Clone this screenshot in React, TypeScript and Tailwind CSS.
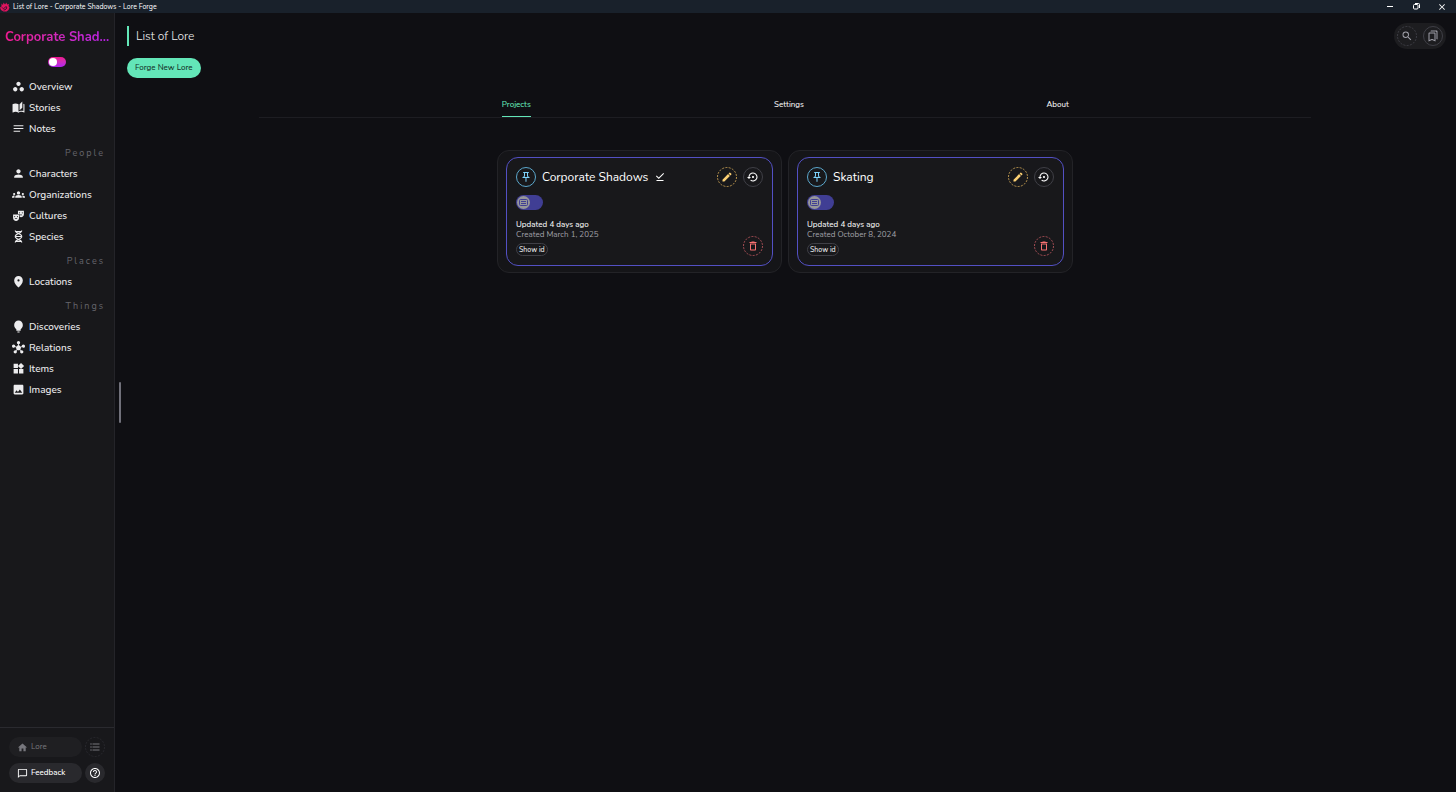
import { useState } from "react";
import type { IconType } from "react-icons";
import {
  MdAutoStories,
  MdChatBubbleOutline,
  MdClose,
  MdDeleteOutline,
  MdDownloadDone,
  MdEdit,
  MdFormatListBulleted,
  MdGroups,
  MdHelpOutline,
  MdHome,
  MdHub,
  MdImage,
  MdNotes,
  MdOutlineBookmarks,
  MdOutlinePushPin,
  MdPerson,
  MdSearch,
  MdSettingsBackupRestore,
  MdTheaterComedy,
  MdWidgets,
  MdWorkspaces,
} from "react-icons/md";

type IconProps = { className?: string };
type NavItem = { label: string; icon: IconType | ((props: IconProps) => React.ReactNode) };
type NavSection = { title?: string; items: NavItem[] };

const HelixIcon = ({ className }: IconProps) => (
  <svg viewBox="0 0 24 24" className={className} fill="none" stroke="currentColor" strokeWidth="2">
    <path d="M6 1c0 6 12 5 12 11S6 17 6 23M18 1c0 6-12 5-12 11s12 5 12 11" />
    <path d="M7 3h10M7 12h10M7 21h10" />
  </svg>
);

const PinIcon = ({ className }: IconProps) => (
  <svg viewBox="0 0 24 24" className={className} fill="currentColor">
    <path
      fillRule="evenodd"
      d="M12 2a8 8 0 0 0-8 8c0 5 4 9 8 13 4-4 8-8 8-13a8 8 0 0 0-8-8zm0 6a2 2 0 1 1 0 4 2 2 0 0 1 0-4z"
    />
  </svg>
);

const BulbIcon = ({ className }: IconProps) => (
  <svg viewBox="0 0 24 24" className={className} fill="currentColor">
    <path d="M12 1a8 8 0 0 0-8 8c0 4 2 6 4 8v3h8v-3c2-2 4-4 4-8a8 8 0 0 0-8-8zM10 21h4v2h-4z" />
  </svg>
);

const SECTIONS: NavSection[] = [
  {
    items: [
      { label: "Overview", icon: MdWorkspaces },
      { label: "Stories", icon: MdAutoStories },
      { label: "Notes", icon: MdNotes },
    ],
  },
  {
    title: "People",
    items: [
      { label: "Characters", icon: MdPerson },
      { label: "Organizations", icon: MdGroups },
      { label: "Cultures", icon: MdTheaterComedy },
      { label: "Species", icon: HelixIcon },
    ],
  },
  { title: "Places", items: [{ label: "Locations", icon: PinIcon }] },
  {
    title: "Things",
    items: [
      { label: "Discoveries", icon: BulbIcon },
      { label: "Relations", icon: MdHub },
      { label: "Items", icon: MdWidgets },
      { label: "Images", icon: MdImage },
    ],
  },
];

const PROJECTS = [
  { name: "Corporate Shadows", created: "March 1, 2025", active: true },
  { name: "Skating", created: "October 8, 2024", active: false },
];

const TABS = ["Projects", "Settings", "About"];

const FlameLogo = () => (
  <svg viewBox="0 0 20 20" className="size-[10px]" aria-hidden="true">
    <path
      fill="#e0145f"
      d="M3 3l3 3 1-5 3 4 3-4 1 4 4-1-1 4 2 3-2 5-4 3H7l-5-3-2-5 3-2z"
    />
    <path fill="none" stroke="#3b1030" strokeWidth="2" d="M4 11c3 4 6 1 7-2M7 16c5 0 7-3 6-7" />
  </svg>
);

// finer dashes than the border style gives at this size
const DashedRing = ({ className }: IconProps) => (
  <svg viewBox="0 0 20 20" className={`absolute inset-0 size-full ${className ?? ""}`} fill="none">
    <circle cx="10" cy="10" r="9.5" stroke="currentColor" strokeDasharray="2 1.3" />
  </svg>
);

const TitleBar = () => (
  <header className="flex h-[13px] shrink-0 items-center bg-[#19212b] pr-[1px] text-white">
    <FlameLogo />
    <span className="ml-[3px] text-[7px] leading-[12px]">
      List of Lore - Corporate Shadows - Lore Forge
    </span>
    <div className="ml-auto flex">
      <button aria-label="Minimize" className="flex h-[13px] w-[26px] items-center justify-center">
        <span className="h-px w-[6px] bg-white" />
      </button>
      <button aria-label="Restore" className="flex h-[13px] w-[26px] items-center justify-center">
        <svg viewBox="0 0 7 7" className="size-[7px]" fill="none" stroke="white">
          <rect x=".5" y="1.5" width="4.5" height="4.5" rx="1" />
          <path d="M2 .5h3.500a1 1 0 0 1 1 1V5" />
        </svg>
      </button>
      <button aria-label="Close" className="flex h-[13px] w-[26px] items-center justify-center">
        <MdClose className="size-[10px]" />
      </button>
    </div>
  </header>
);

const Sidebar = () => (
  <aside className="flex w-[115px] shrink-0 flex-col border-r border-[#242429] bg-[#18181b]">
    <h2 className="mt-[15px] self-start truncate bg-linear-to-r from-[#f0148c] to-[#b81ee6] bg-clip-text pl-[5px] text-[13px] leading-[18px] font-bold text-transparent">
      Corporate Shad...
    </h2>
    <label className="mx-auto mt-[11px] block h-[10px] w-[18px] cursor-pointer rounded-full bg-linear-to-b from-[#f0148c] to-[#b01ef0] p-px">
      <input type="checkbox" aria-label="Project theme" className="peer sr-only" />
      <span className="block size-[8px] rounded-full bg-white peer-checked:ml-[8px]" />
    </label>

    <nav className="mt-[9px] flex flex-col">
      {SECTIONS.map((section, i) => (
        <div key={i}>
          {section.title && (
            <h3 className="mt-[4px] pr-[9px] text-right text-[9px] leading-[20px] tracking-[2px] text-[#66666d]">
              {section.title}
            </h3>
          )}
          {section.items.map(({ label, icon: Icon }) => (
            <a
              key={label}
              href="#"
              className="flex h-[21px] items-center gap-[4px] pl-[12px] text-[10px] leading-[14px] font-medium text-[#ececee]"
            >
              <Icon className="size-[13px] shrink-0" />
              {label}
            </a>
          ))}
        </div>
      ))}
    </nav>

    <div className="mt-auto grid grid-cols-[73px_20px] gap-x-[3px] gap-y-[6px] border-t border-[#2a2a2f] px-[9px] pt-[9px] pb-[9px]">
      <button className="flex h-[20px] items-center gap-[3px] rounded-full bg-[#1f1f22] pl-[8px] text-[8px] text-[#77777d]">
        <MdHome className="size-[11px]" />
        Lore
      </button>
      <button
        aria-label="Project list"
        className="relative flex size-[20px] items-center justify-center rounded-full text-[#77777d]"
      >
        <DashedRing className="text-[#29292e]" />
        <MdFormatListBulleted className="size-[12px]" />
      </button>
      <button className="flex h-[20px] items-center gap-[3px] rounded-full bg-[#29292d] pl-[8px] text-[8px] font-medium text-white">
        <MdChatBubbleOutline className="size-[11px]" />
        Feedback
      </button>
      <button
        aria-label="Help"
        className="flex size-[20px] items-center justify-center rounded-full bg-[#29292d] text-white"
      >
        <MdHelpOutline className="size-[12px]" />
      </button>
    </div>
  </aside>
);

const ProjectCard = ({ name, created, active }: (typeof PROJECTS)[number]) => (
  <article className="w-[285px] rounded-[12px] border border-[#232327] bg-[#151518] px-[8px] py-[6px]">
    <div className="rounded-[12px] border border-[#5350c4] bg-[#18181b] p-[9px]">
      <div className="flex h-[20px] items-center">
        <button
          aria-label={`Pin ${name}`}
          className="flex size-[20px] items-center justify-center rounded-full border border-[#5ba7cc] text-[#7dd3fc]"
        >
          <MdOutlinePushPin className="size-[12px]" />
        </button>
        <h2 className="ml-[6px] text-[12px] leading-[18px] text-white">{name}</h2>
        {active && <MdDownloadDone className="ml-[6px] size-[12px] text-white" />}
        <button
          aria-label={`Edit ${name}`}
          className="relative ml-auto flex size-[20px] items-center justify-center rounded-full text-[#fcd073]"
        >
          <DashedRing className="text-[#b9954f]" />
          <MdEdit className="size-[12px]" />
        </button>
        <button
          aria-label={`Restore ${name}`}
          className="ml-[6px] flex size-[20px] items-center justify-center rounded-full border border-[#3f3f46] text-white"
        >
          <MdSettingsBackupRestore className="size-[12px]" />
        </button>
      </div>
      <label className="mt-[8px] block h-[15px] w-[27px] cursor-pointer rounded-full bg-[#403e94] p-px">
        <input type="checkbox" aria-label={`Show ${name}`} className="peer sr-only" />
        <span className="flex size-[13px] items-center justify-center rounded-full bg-[#96969a] text-[#403e94] peer-checked:ml-[12px]">
          <svg viewBox="0 0 9 9" className="size-[9px]" fill="none" stroke="currentColor">
            <rect x=".5" y="1.500" width="8" height="6" rx="1" />
            <path d="M2 3.500h5M2 5.500h5" />
          </svg>
        </span>
      </label>
      <div className="mt-[10px] flex items-end justify-between">
        <div>
          <p className="text-[8px] leading-[10px] font-medium text-[#f4f4f5]">Updated 4 days ago</p>
          <p className="text-[8px] leading-[10px] text-[#a1a1a8]">Created {created}</p>
          <button className="mt-[3px] block h-[13px] rounded-full border border-[#3f3f46] px-[2px] text-[7px] leading-[11px] font-medium text-[#ececee]">
            Show id
          </button>
        </div>
        <button
          aria-label={`Delete ${name}`}
          className="relative flex size-[20px] items-center justify-center rounded-full text-[#f87171]"
        >
          <DashedRing className="text-[#a84f56]" />
          <MdDeleteOutline className="size-[12px]" />
        </button>
      </div>
    </div>
  </article>
);

const App = () => {
  const [tab, setTab] = useState("Projects");

  return (
    <div className="flex min-h-screen flex-col bg-[#0f0f13] font-['Nunito','Lato',sans-serif]">
      <TitleBar />
      <div className="flex flex-1">
        <Sidebar />
        <div className="flex shrink-0 items-center pl-[4px]">
          <span className="h-[41px] w-[2px] rounded-full bg-[#70707a]" />
        </div>
        <main className="min-w-0 flex-1 pt-[10px] pr-[10px] pl-[6px]">
          <div className="flex items-center justify-between">
            <h1 className="border-l-2 border-[#63e6b8] pl-[7px] text-[12px] leading-[20px] font-light text-[#f4f4f5]">
              List of Lore
            </h1>
            <div className="flex gap-[6px] rounded-full bg-[#1d1d20] p-[3px] text-[#a1a1aa]">
              <button
                aria-label="Search"
                className="relative flex size-[20px] items-center justify-center rounded-full"
              >
                <DashedRing className="text-[#3f3f46]" />
                <MdSearch className="size-[12px]" />
              </button>
              <button
                aria-label="Bookmarks"
                className="flex size-[20px] items-center justify-center rounded-full border border-[#3f3f46]"
              >
                <MdOutlineBookmarks className="size-[12px]" />
              </button>
            </div>
          </div>
          <button className="mt-[9px] block h-[20px] rounded-full bg-[#63e6b8] px-[8px] text-[8px] font-medium text-[#16352c]">
            Forge New Lore
          </button>

          <section className="pr-[3px]">
            <div
              role="tablist"
              className="mx-auto mt-[15px] grid w-4/5 grid-cols-[515fr_30fr_507fr] border-b border-[#1d1d22]"
            >
              {TABS.map((name) => (
                <button
                  key={name}
                  role="tab"
                  aria-selected={tab === name}
                  onClick={() => setTab(name)}
                  className="flex justify-center text-[8px] leading-[12px] font-medium text-[#f4f4f5] aria-selected:text-[#63e6b8]"
                >
                  <span
                    className={
                      tab === name
                        ? "border-b border-[#63e6b8] pt-[6px] pb-[5px]"
                        : "border-b border-transparent pt-[6px] pb-[5px]"
                    }
                  >
                    {name}
                  </span>
                </button>
              ))}
            </div>

            <div className="mt-[32px] flex flex-wrap justify-center gap-[6px]">
              {PROJECTS.map((project) => (
                <ProjectCard key={project.name} {...project} />
              ))}
            </div>
          </section>
        </main>
      </div>
    </div>
  );
};

export default App;
